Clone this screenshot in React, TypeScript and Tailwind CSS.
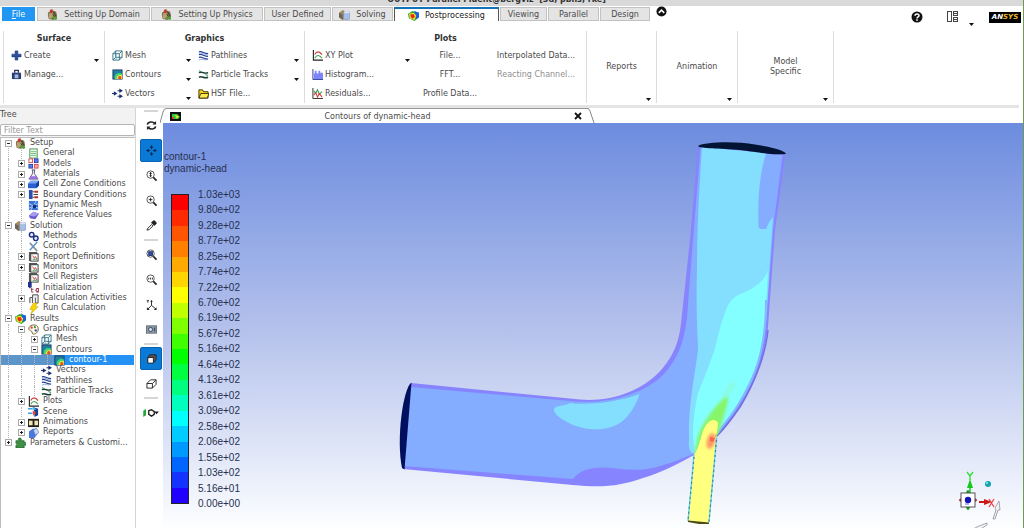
import React from 'react';

type IconName =
  | 'setup' | 'solution' | 'results' | 'general' | 'models' | 'materials' | 'cellzone' | 'boundary'
  | 'dynmesh' | 'reference' | 'methods' | 'controls' | 'report' | 'init' | 'calc' | 'run' | 'graphics'
  | 'mesh' | 'contours' | 'vectors' | 'pathlines' | 'particles' | 'plots' | 'scene' | 'animations'
  | 'reports' | 'params' | 'plus' | 'manage' | 'folder' | 'histogram' | 'residuals';

// every icon is drawn on a 12x12 grid
const icons: Record<IconName, React.ReactNode> = {
  setup: (
    <>
      <path d="M1 4 5 1l5 2 1 5-4 4-5-1-1-4z" fill="#7d6a4a" />
      <path d="M2 5l4-2 1 5-3 3-2-1z" fill="#b5a272" />
      <path d="M3 1l3-1v4L4 5z" fill="#c9362b" />
      <path d="M6 6l5 5M7 3l3 5" stroke="#3c3a28" strokeWidth="1" />
      <path d="M7 8l4 1-1 3-4-1z" fill="#4fa52f" />
    </>
  ),
  solution: (
    <>
      <path d="M0 4 4 1l4 2v7l-4 2-4-3z" fill="#a58d58" />
      <path d="M0 4l4 2v6l-4-3z" fill="#6c665a" />
      <path d="M5 4c0-2 7-2 7 0v6c0 2-7 2-7 0z" fill="#a9bfe6" stroke="#6d85b5" strokeWidth=".6" />
      <ellipse cx="8.500" cy="3.500" rx="3.200" ry="1.200" fill="#d8e3f7" />
    </>
  ),
  results: (
    <>
      <path d="M0 4 5 1l7 2v5l-5 4-6-3z" fill="#27a53c" />
      <path d="M7 1l5 2v5l-3 2z" fill="#1d5fe0" />
      <path d="M1 4l5-1 3 3-2 5-5-2z" fill="#f5e51c" />
      <path d="M2.500 4.500l4 0 1 3-2.500 2-2-2z" fill="#e8281c" />
    </>
  ),
  general: (
    <>
      <rect x="2" y="1" width="8" height="10" fill="#f3fff3" stroke="#3f8f4a" />
      <path d="M3 4h6M3 6h6M3 8h6" stroke="#5bb068" strokeWidth=".9" />
    </>
  ),
  models: (
    <>
      <rect x="1" y="1" width="4" height="4" fill="#fff" stroke="#e04848" />
      <rect x="7" y="1" width="4" height="4" fill="#5b7be8" stroke="#2d46b5" />
      <rect x="1" y="7" width="4" height="4" fill="#5b7be8" stroke="#2d46b5" />
      <rect x="7" y="7" width="4" height="4" fill="#f8b0b0" stroke="#e04848" />
    </>
  ),
  materials: (
    <>
      <path d="M4 1h4M5 1v4L1 11h10L7 5V1" fill="#f4f1ff" stroke="#5a5470" />
      <path d="M3 8h6l2 3H1z" fill="#9a6fe0" />
    </>
  ),
  cellzone: (
    <>
      <path d="M0 5l3-3h9v5l-3 3H0z" fill="#2b5fd0" />
      <path d="M0 5l3-3h9L9 5z" fill="#7ba6f5" />
      <path d="M9 5l3-3v5l-3 3z" fill="#173c94" />
    </>
  ),
  boundary: (
    <>
      <path d="M1 1h4v10H1z" fill="#2a4fb0" />
      <path d="M7 2h4v2H7zM7 8h4v2H7z" fill="#b5322c" />
      <path d="M5 3h2M5 9h2M6 6h5" stroke="#333" />
    </>
  ),
  dynmesh: (
    <>
      <rect x="1" y="1" width="10" height="10" fill="#3a73d8" />
      <path d="M1 4l10 5M3 11l6-10M1 9l10-5" stroke="#cfe0ff" strokeWidth=".9" />
      <circle cx="7" cy="7" r="2" fill="#0f2f80" />
    </>
  ),
  reference: (
    <>
      <path d="M1 6l5-4 6 2-4 6-6-1z" fill="#6a5ad0" />
      <path d="M1 6l5-4 6 2-5 3z" fill="#a89cf0" />
    </>
  ),
  methods: (
    <>
      <circle cx="4" cy="4" r="2.500" fill="#dfe5ff" stroke="#1d2b80" strokeWidth="1.500" />
      <circle cx="8.500" cy="8" r="2.500" fill="#dfe5ff" stroke="#1d2b80" strokeWidth="1.500" />
    </>
  ),
  controls: (
    <>
      <path d="M2 2l8 9" stroke="#8a949e" strokeWidth="1.800" />
      <path d="M10 1L2 10" stroke="#5c93c8" strokeWidth="1.600" />
    </>
  ),
  report: (
    <>
      <path d="M1 1h9v2H3v8H1z" fill="#555" />
      <rect x="3" y="3" width="8" height="8" fill="#fff" stroke="#333" />
      <path d="M5 5l2 3 1-2 2 3" stroke="#d04040" fill="none" />
      <path d="M5 9h5" stroke="#3a9a50" />
    </>
  ),
  init: (
    <>
      <path d="M0 0h4v5l-2 2-2-2z" fill="#20338f" />
      <path d="M4 6v5h2M3 8h3M7.500 9h1.500" stroke="#8a2a3a" strokeWidth=".9" />
      <rect x="9.500" y="7" width="2" height="4" stroke="#8a2a3a" strokeWidth=".9" />
    </>
  ),
  calc: <path d="M2 11V5h3v6M5 5V2h6v9H8V5" fill="#eee" stroke="#444" />,
  run: <path d="M6 0h4L8 4h3L3 12l2-5H2z" fill="#f7d800" stroke="#d09a00" strokeWidth=".6" />,
  graphics: (
    <>
      <path d="M1 4c2-4 9-4 10 0s-2 7-5 7c-2 0-1-2-2-3S0 7 1 4z" fill="#fff7e0" stroke="#6b5a38" />
      <circle cx="4" cy="4" r="1.200" fill="#d33" />
      <circle cx="7.500" cy="3.500" r="1.200" fill="#2a9a3a" />
      <circle cx="8.500" cy="7" r="1.300" fill="#2a55d0" />
    </>
  ),
  mesh: (
    <>
      <path d="M1 4h7v7H1zM4 1h7v7H4zM1 4l3-3M8 4l3-3M8 11l3-3M1 11l3-3" fill="none" stroke="#1f6577" strokeWidth=".9" />
      <path d="M4.500 4v7" stroke="#58a6b8" strokeWidth=".8" />
    </>
  ),
  contours: (
    <>
      <rect x="1" y="1" width="10" height="10" fill="#1f7f9c" stroke="#1a3f6c" />
      <path d="M3 11c-1-5 3-8 8-6v6z" fill="#3fd67a" />
      <path d="M5 11c0-4 3-5 6-4v4z" fill="#f2e33a" />
      <circle cx="8.500" cy="9.500" r="1.800" fill="#e64a2e" />
    </>
  ),
  vectors: (
    <>
      <path d="M0 6h4M6 3h3M6 9h3" stroke="#1c2f6e" strokeWidth="1.300" />
      <path d="M2 3.500l4 2.500-4 2.500zM8 .5l4 2.500-4 2.500zM8 6.500l4 2.500-4 2.500z" fill="#1c2f6e" />
    </>
  ),
  pathlines: (
    <>
      <path d="M1 2c4-1 5 2 10 2M1 5c4-1 5 2 10 2M1 8c4-1 5 2 10 2" fill="none" stroke="#25418f" strokeWidth="1.300" />
      <path d="M1 3.500c4-1 5 2 10 2M1 11c4-2 6 0 8 0" fill="none" stroke="#8aa4e0" />
    </>
  ),
  particles: (
    <>
      <path d="M1 4c4-2 5 2 10 0M1 9c4-2 5 2 10 0" fill="none" stroke="#1d3c33" strokeWidth="1.600" />
      <path d="M1 2l3 1M8 6l3 1" stroke="#3b9c6b" strokeWidth="1.200" />
    </>
  ),
  plots: (
    <>
      <path d="M1.500 0v11H12" fill="none" stroke="#222" strokeWidth="1.200" />
      <path d="M3 5c2-4 5-4 8 0" fill="none" stroke="#d43a3a" strokeWidth="1.200" />
      <path d="M3 9c2-4 5-4 8 0" fill="none" stroke="#3ba04c" strokeWidth="1.200" />
    </>
  ),
  scene: (
    <>
      <path d="M0 3h5M0 8h5" stroke="#3aa0e8" strokeWidth="1.600" />
      <path d="M5 1l6 2v7l-4 2V6z" fill="#173f9a" />
      <path d="M5 5l4 2-3 4z" fill="#e6402a" />
      <path d="M6 1l3 3H5z" fill="#45c8e8" />
    </>
  ),
  animations: (
    <>
      <rect x="0" y="2" width="12" height="9" fill="#221f18" />
      <rect x="1" y="4" width="4" height="5" fill="#efe7b8" />
      <rect x="7" y="4" width="4" height="5" fill="#efe7b8" />
    </>
  ),
  reports: (
    <>
      <path d="M1 5l4-3h5v6l-3 4H1z" fill="#4a78dc" />
      <path d="M6 4l3-3 3 5-4 3z" fill="#c9d8fa" stroke="#4a66a0" strokeWidth=".6" />
    </>
  ),
  params: <path d="M1 4h3c-2-4 4-4 3 0h3v2c4-1 3 4 0 3v3H1V9c2 0 2-2 0-2z" fill="#3f8f46" stroke="#1f5a2a" strokeWidth=".7" />,
  plus: <path d="M4.500 1h3v3.500H11v3H7.500V11h-3V7.500H1v-3h3.500z" fill="#2b4f9e" stroke="#1c3474" strokeWidth=".6" />,
  manage: (
    <>
      <path d="M4 4V1.500h4V4" fill="none" stroke="#26365c" strokeWidth="1.400" />
      <rect x="1" y="4" width="10" height="7" fill="#2c4277" />
      <rect x="4" y="6" width="4" height="4" fill="#a9bbe2" />
    </>
  ),
  folder: (
    <>
      <path d="M1 2h4l1 2h5v7H1z" fill="#f2d21a" stroke="#3d3405" />
      <path d="M1 11l2-5h9l-2 5z" fill="#ffe94a" stroke="#3d3405" />
    </>
  ),
  histogram: (
    <>
      <path d="M2 11V5h1V2h2v3h2V2h2v2h3v7z" fill="#7c86f8" />
      <path d="M1 0v11.500h11" fill="none" stroke="#28348c" />
    </>
  ),
  residuals: (
    <>
      <path d="M1 0v11.500h11" fill="none" stroke="#222" />
      <path d="M2 3l2 3 2-4 2 5 3-3" fill="none" stroke="#2f9c48" strokeWidth="1.100" />
      <path d="M2 8l2-3 2 5 2-4 3 4" fill="none" stroke="#d43a3a" strokeWidth="1.100" />
    </>
  ),
};

function Icon({ name }: { name: IconName }) {
  return (
    <svg viewBox="0 0 12 12" className="h-[11px] w-[11px] shrink-0" fill="none" aria-hidden="true">
      {icons[name]}
    </svg>
  );
}

function Caret({ className = '' }: { className?: string }) {
  return (
    <svg viewBox="0 0 5 3" className={`h-[3px] w-[5px] shrink-0 ${className}`} aria-hidden="true">
      <path d="M0 0h5L2.500 3z" fill="#111" />
    </svg>
  );
}

const tabs: { label: string; icon?: IconName; width: string; active?: boolean }[] = [
  { label: 'Setting Up Domain', icon: 'setup', width: 'w-[113px]' },
  { label: 'Setting Up Physics', icon: 'setup', width: 'w-[112px]' },
  { label: 'User Defined', width: 'w-[67px]' },
  { label: 'Solving', icon: 'solution', width: 'w-[61px]' },
  { label: 'Postprocessing', icon: 'results', width: 'w-[105px]', active: true },
  { label: 'Viewing', width: 'w-[47px]' },
  { label: 'Parallel', width: 'w-[51px]' },
  { label: 'Design', width: 'w-[50px]' },
];

function TabStrip() {
  return (
    <nav className="flex h-[15px] items-end gap-px pl-[2px]">
      <button className="mr-px h-[14px] w-[33px] bg-[#2196f3] text-white">
        <span className="underline">F</span>ile
      </button>
      {tabs.map((tab) => (
        <button
          key={tab.label}
          className={`flex h-[14px] items-center justify-center whitespace-nowrap ${tab.width} ${
            tab.icon ? 'gap-[6px]' : ''
          } ${
            tab.active
              ? 'border-x border-t-2 border-x-[#555] border-t-[#1273b8] bg-white text-[#222]'
              : 'border border-[#c2c2c2] bg-[#e4e4e4]'
          }`}
        >
          {tab.icon && <Icon name={tab.icon} />}
          {tab.label}
        </button>
      ))}
      <button aria-label="Collapse ribbon" className="ml-[5px] self-start">
        <svg viewBox="0 0 12 12" className="h-[11px] w-[11px]">
          <circle cx="6" cy="6" r="5.500" fill="#111" />
          <path d="M3 7.500L6 4.500l3 3" stroke="#fff" strokeWidth="1.600" fill="none" />
        </svg>
      </button>
    </nav>
  );
}

function RibbonItem({ icon, label, menu }: { icon: IconName; label: string; menu?: boolean }) {
  return (
    <button className="flex items-center gap-[2px] whitespace-nowrap text-left">
      <Icon name={icon} />
      <span className="flex-1">{label}</span>
      {menu && <Caret className="mb-[3px] self-end" />}
    </button>
  );
}

function RibbonGroup({ title, width, children }: { title: string; width: string; children: React.ReactNode }) {
  return (
    <section className={`flex flex-col border-r border-[#dcdcdc] ${width}`}>
      <h2 className="h-[15px] text-center leading-[15px] font-bold text-[#333]">{title}</h2>
      {children}
    </section>
  );
}

function RibbonMenu({ label, width }: { label: string; width: string }) {
  return (
    <button className={`relative flex items-center justify-center border-r border-[#dcdcdc] leading-[10px] ${width}`}>
      <span className="flex w-[40px] justify-center text-center">{label}</span>
      <Caret className="absolute right-[5px] bottom-[2px]" />
    </button>
  );
}

function Ribbon() {
  return (
    <div className="mt-[10px] ml-[3px] flex h-[72px] border-l border-[#dcdcdc]">
      <RibbonGroup title="Surface" width="w-[101px]">
        <div className="grid flex-1 grid-rows-3 pr-[5px] pl-[7px]">
          <RibbonItem icon="plus" label="Create" menu />
          <RibbonItem icon="manage" label="Manage..." />
        </div>
      </RibbonGroup>
      <RibbonGroup title="Graphics" width="w-[200px]">
        <div className="grid flex-1 grid-cols-[79px_101px] grid-rows-3 gap-x-[7px] pl-[7px]">
          <RibbonItem icon="mesh" label="Mesh" menu />
          <RibbonItem icon="pathlines" label="Pathlines" menu />
          <RibbonItem icon="contours" label="Contours" menu />
          <RibbonItem icon="particles" label="Particle Tracks" menu />
          <RibbonItem icon="vectors" label="Vectors" menu />
          <RibbonItem icon="folder" label="HSF File..." />
        </div>
      </RibbonGroup>
      <RibbonGroup title="Plots" width="w-[282px]">
        <div className="grid flex-1 grid-cols-[98px_80px_92px] grid-rows-3 pl-[7px] whitespace-nowrap">
          <RibbonItem icon="plots" label="XY Plot" menu />
          <button>File...</button>
          <button>Interpolated Data...</button>
          <RibbonItem icon="histogram" label="Histogram..." />
          <button>FFT...</button>
          <button disabled className="text-[#8f8f8f]">Reacting Channel...</button>
          <RibbonItem icon="residuals" label="Residuals..." />
          <button>Profile Data...</button>
        </div>
      </RibbonGroup>
      <RibbonMenu label="Reports" width="w-[70px]" />
      <RibbonMenu label="Animation" width="w-[81px]" />
      <RibbonMenu label="Model Specific" width="w-[96px]" />
    </div>
  );
}

function HeaderTools() {
  return (
    <div className="flex items-start pt-[5px] pr-[2px]">
      <button aria-label="Help" className="mr-[24px]">
        <svg viewBox="0 0 12 12" className="h-[12px] w-[12px]">
          <circle cx="6" cy="6" r="5.500" fill="#111" />
          <path d="M4 4.800C4 2.400 8 2.400 8 4.700 8 6 6 6 6 7.500" stroke="#fff" strokeWidth="1.500" fill="none" />
          <rect x="5.200" y="8.300" width="1.600" height="1.500" fill="#fff" />
        </svg>
      </button>
      <button aria-label="Arrange windows" className="flex items-end gap-[11px]">
        <svg viewBox="0 0 11 11" className="h-[11px] w-[11px]" fill="none" stroke="#444">
          <rect x=".5" y=".5" width="4" height="10" />
          <rect x="6.500" y=".5" width="4" height="4" />
          <rect x="6.500" y="6.500" width="4" height="4" />
          <path d="M6.500 2.500h4M6.500 8.500h4" />
        </svg>
        <Caret className="-mb-1" />
      </button>
      <div className="mt-px ml-[15px] flex h-[11px] w-[32px] items-center justify-center bg-black text-[7px] font-bold text-white italic">
        AN<span className="text-[#e8b92c]">SYS</span>
      </div>
    </div>
  );
}

type Node = { label: string; icon: IconName; depth: number; toggle?: '+' | '-'; selected?: boolean };

const nodes: Node[] = [
  { label: 'Setup', icon: 'setup', depth: 0, toggle: '-' },
  { label: 'General', icon: 'general', depth: 1 },
  { label: 'Models', icon: 'models', depth: 1, toggle: '+' },
  { label: 'Materials', icon: 'materials', depth: 1, toggle: '+' },
  { label: 'Cell Zone Conditions', icon: 'cellzone', depth: 1, toggle: '+' },
  { label: 'Boundary Conditions', icon: 'boundary', depth: 1, toggle: '+' },
  { label: 'Dynamic Mesh', icon: 'dynmesh', depth: 1 },
  { label: 'Reference Values', icon: 'reference', depth: 1 },
  { label: 'Solution', icon: 'solution', depth: 0, toggle: '-' },
  { label: 'Methods', icon: 'methods', depth: 1 },
  { label: 'Controls', icon: 'controls', depth: 1 },
  { label: 'Report Definitions', icon: 'report', depth: 1, toggle: '+' },
  { label: 'Monitors', icon: 'report', depth: 1, toggle: '+' },
  { label: 'Cell Registers', icon: 'report', depth: 1 },
  { label: 'Initialization', icon: 'init', depth: 1 },
  { label: 'Calculation Activities', icon: 'calc', depth: 1, toggle: '+' },
  { label: 'Run Calculation', icon: 'run', depth: 1 },
  { label: 'Results', icon: 'results', depth: 0, toggle: '-' },
  { label: 'Graphics', icon: 'graphics', depth: 1, toggle: '-' },
  { label: 'Mesh', icon: 'mesh', depth: 2, toggle: '+' },
  { label: 'Contours', icon: 'contours', depth: 2, toggle: '-' },
  { label: 'contour-1', icon: 'contours', depth: 3, selected: true },
  { label: 'Vectors', icon: 'vectors', depth: 2 },
  { label: 'Pathlines', icon: 'pathlines', depth: 2 },
  { label: 'Particle Tracks', icon: 'particles', depth: 2 },
  { label: 'Plots', icon: 'plots', depth: 1, toggle: '+' },
  { label: 'Scene', icon: 'scene', depth: 1 },
  { label: 'Animations', icon: 'animations', depth: 1, toggle: '+' },
  { label: 'Reports', icon: 'reports', depth: 1, toggle: '+' },
  { label: 'Parameters & Customi...', icon: 'params', depth: 0, toggle: '+' },
];

function TreeRow({ node }: { node: Node }) {
  return (
    <li
      role="treeitem"
      aria-selected={!!node.selected}
      className={`flex min-h-0 flex-1 items-center pl-px ${
        node.selected ? 'bg-linear-to-r from-[#5b95c9] from-40% to-[#2492f5] to-40% text-white' : ''
      }`}
    >
      {Array.from({ length: node.depth }, (_, i) => (
        <span key={i} className="ml-[6px] h-full w-[7px] shrink-0 border-l border-dotted border-[#b5b5b5]" />
      ))}
      <span className="flex h-full w-[13px] shrink-0 items-center justify-center">
        {node.toggle ? (
          <svg viewBox="0 0 7 7" className="h-[7px] w-[7px]" fill="#fff" stroke="#aaa">
            <rect x=".5" y=".5" width="6" height="6" />
            <path d={node.toggle === '+' ? 'M2 3.500h3M3.500 2v3' : 'M2 3.500h3'} stroke="#222" />
          </svg>
        ) : (
          <span className="ml-[6px] h-full w-[7px] border-l border-dotted border-[#b5b5b5]" />
        )}
      </span>
      <Icon name={node.icon} />
      <button className="ml-[4px] leading-[10px] whitespace-nowrap">{node.label}</button>
    </li>
  );
}

function TreePanel() {
  return (
    <aside className="flex w-[136px] shrink-0 flex-col border-r border-[#d5d5d5] bg-[#f2f2f2]">
      <label htmlFor="tree-filter" className="h-[16px] leading-[14px]">
        Tree
      </label>
      <input
        id="tree-filter"
        placeholder="Filter Text"
        className="h-[12px] rounded-[2px] border border-[#b4b4b4] bg-white px-[3px] placeholder:text-[#999]"
      />
      <div className="mt-px flex-1 border-t border-l border-[#bdbdbd] bg-white">
        <ul role="tree" className="flex h-[310px] flex-col pr-px">
          {nodes.map((node) => (
            <TreeRow key={node.label + node.depth} node={node} />
          ))}
        </ul>
      </div>
    </aside>
  );
}

function Lens({ children }: { children?: React.ReactNode }) {
  return (
    <>
      <circle cx="5" cy="5" r="4" fill="#fff" strokeWidth=".8" />
      <path d="M8 8l3.500 3.500" strokeWidth="1.800" />
      {children}
    </>
  );
}

const tools: ({ label: string; active?: boolean; art: React.ReactNode } | null)[] = [
  null,
  {
    label: 'Rotate view',
    art: (
      <>
        <path d="M1.500 5C2 2 7 1 10 4M10.500 7C10 10 5 11 2 8" strokeWidth="1.700" />
        <path d="M11 1v4H7zM1 11V7h4z" fill="#222" stroke="none" />
      </>
    ),
  },
  {
    label: 'Pan',
    active: true,
    art: (
      <>
        <path d="M6 3v1.500M6 7.500V9M3 6h1.500M7.500 6H9" stroke="#06264d" />
        <path d="M6 0l2 3H4zM6 12l2-3H4zM0 6l3-2v4zM12 6L9 4v4z" fill="#06264d" stroke="none" />
      </>
    ),
  },
  { label: 'Zoom', art: <Lens><path d="M5 3v4" /><path d="M3.500 4.300L5 2l1.500 2.300zM3.500 5.700L5 8l1.500-2.300z" fill="#222" stroke="none" /></Lens> },
  { label: 'Zoom in', art: <Lens><path d="M5 3v4M3 5h4" /></Lens> },
  {
    label: 'Probe',
    art: (
      <>
        <path d="M1 11l1-2 4-4 1.500 1.500-4 4z" fill="#fff" />
        <path d="M6 3l3 3 2-2c1-1-2-4-3-3z" fill="#222" />
      </>
    ),
  },
  null,
  { label: 'Fit to window', art: <Lens><rect x="3" y="3" width="4" height="4" fill="#2f4ea8" stroke="#1a2e70" /></Lens> },
  { label: 'Zoom to scale', art: <Lens><path d="M3 4v2M5 4v2M7 4v2" /></Lens> },
  {
    label: 'Orient view',
    art: (
      <>
        <path d="M6 2v5L2 11M6 7l5 4M1 1l1 1.500M3 1L2 2.500V4" />
        <path d="M4.500 3L6 1l1.500 2zM1 9v3h3zM11.500 9v3h-3z" fill="#222" stroke="none" />
      </>
    ),
  },
  {
    label: 'Save picture',
    art: (
      <>
        <rect x="0.500" y="2" width="11" height="8" fill="#8b97a5" stroke="#66727f" />
        <circle cx="5" cy="6" r="2.200" fill="#d5e1ed" stroke="#34445a" />
        <path d="M9.500 4v4" stroke="#26374e" />
      </>
    ),
  },
  null,
  {
    label: 'Shaded view',
    active: true,
    art: (
      <>
        <path d="M2 5l2-3h7v5l-2 3H2z" fill="#555" />
        <rect x="2" y="5" width="6" height="6" fill="#fff" />
      </>
    ),
  },
  { label: 'Perspective', art: <path d="M1 6h6v5H1zM1 6l4-4h6L7 6M11 2v5l-4 4" fill="#fff" /> },
  null,
  {
    label: 'Display options',
    art: (
      <>
        <path d="M-3 4l3-2v7l-3 2z" fill="#23a839" stroke="none" />
        <path d="M3 4l3-1 3 2v3l-3 2-3-2z" fill="#fff" strokeWidth="1.500" />
        <path d="M9 5h5l-2.500 3z" fill="#111" stroke="none" />
      </>
    ),
  },
];

function ToolStrip() {
  return (
    <div className="flex w-[27px] shrink-0 flex-col items-center bg-white pt-px pl-[3px]">
      {tools.map((tool, i) =>
        tool ? (
          <button
            key={tool.label}
            aria-label={tool.label}
            className={`my-px flex h-[23px] w-[22px] items-center justify-center rounded-[2px] ${
              tool.active ? 'border border-[#0a63b0] bg-[#0a7ad6]' : ''
            }`}
          >
            <svg viewBox="0 0 12 12" className="h-[11px] w-[11px] overflow-visible" fill="none" stroke="#222" aria-hidden="true">
              {tool.art}
            </svg>
          </button>
        ) : (
          <hr key={i} className="my-px h-[2px] w-[14px] border-y border-[#d6d6d6]" />
        ),
      )}
    </div>
  );
}

const scale: { label: string; color: string }[] = [
  { label: '1.03e+03', color: 'bg-[#ff0000]' },
  { label: '9.80e+02', color: 'bg-[#ff2a00]' },
  { label: '9.28e+02', color: 'bg-[#ff5500]' },
  { label: '8.77e+02', color: 'bg-[#ff8000]' },
  { label: '8.25e+02', color: 'bg-[#ffaa00]' },
  { label: '7.74e+02', color: 'bg-[#ffd500]' },
  { label: '7.22e+02', color: 'bg-[#ffff00]' },
  { label: '6.70e+02', color: 'bg-[#bfff00]' },
  { label: '6.19e+02', color: 'bg-[#80ff00]' },
  { label: '5.67e+02', color: 'bg-[#40ff00]' },
  { label: '5.16e+02', color: 'bg-[#00ff00]' },
  { label: '4.64e+02', color: 'bg-[#00ff40]' },
  { label: '4.13e+02', color: 'bg-[#00ff80]' },
  { label: '3.61e+02', color: 'bg-[#00ffbf]' },
  { label: '3.09e+02', color: 'bg-[#00ffff]' },
  { label: '2.58e+02', color: 'bg-[#00ccff]' },
  { label: '2.06e+02', color: 'bg-[#0099ff]' },
  { label: '1.55e+02', color: 'bg-[#0066ff]' },
  { label: '1.03e+02', color: 'bg-[#1433ff]' },
  { label: '5.16e+01', color: 'bg-[#2000ff]' },
];

function Legend() {
  return (
    <div className="absolute top-[28px] left-[1px] font-['Liberation_Sans',sans-serif] text-[10px] leading-[12px] text-[#26304f]">
      <p>contour-1</p>
      <p>dynamic-head</p>
      <div className="mt-[12px] flex gap-[9px] pl-[7px]">
        <div className="mt-[7px] flex h-[310px] w-[18px] flex-col border border-[#222]">
          {scale.map((band) => (
            <span key={band.label} className={`flex-1 ${band.color}`} />
          ))}
        </div>
        <ul className="flex h-[325px] flex-col">
          {scale.map((band) => (
            <li key={band.label} className="flex flex-1 items-center justify-end">{band.label}</li>
          ))}
          <li className="flex flex-1 items-center justify-end">0.00e+00</li>
        </ul>
      </div>
    </div>
  );
}

function PipeModel() {
  return (
    <svg viewBox="163 123 860 405" className="absolute inset-0 h-full w-full" aria-label="Contours of dynamic head on the elbow">
      <defs>
        <filter id="soft" x="-50%" y="-50%" width="200%" height="200%">
          <feGaussianBlur stdDeviation="1.500" />
        </filter>
        <clipPath id="jet">
          <path d="M689 385H760L717 436 709 524 688 522 694 455z" />
        </clipPath>
      </defs>
      {/* wall */}
      <path
        d="M411 383L580 399.500C606 402 640 394 662 369C678 350 680 335 682 314L690 240 698 146 785.500 153 775 230 768.500 320C767 350 757 380 740 407C731 420 722 431 717 436L694 455C680 463 660 473 643 478C620 486 603 488 573 485L403 469z"
        fill="#8784ff"
      />
      {/* second band */}
      <path
        d="M410.500 387L570 401C606 405 644 395 665 373C680 355 684 340 687 318L691 265 700.500 148 782.500 155 773 230 766.500 320C764 350 755 378 738 405L716 434 694 454C680 459 672 463 660 466C645 471 633 470 620 469C600 466 582 467 573 479L403.500 466z"
        fill="#84adff"
      />
      <path
        d="M554 409C556 405 565 406 570 403C580 405 605 403 613 401C623 399 632 397 639.500 394C637 404 628 418 620 423C608 431 588 431 573 425C562 420 553 414 554 409z"
        fill="#84dfff"
      />
      <path
        d="M702 147L766 153C758 180 758 205 758.500 227Q759 229 761 229H766C768 224 770 220 773 217L766 320C764 350 754 378 738 404L716 434 696 454C690 454 688 448 689 440C688 400 698 360 698 347C697 325 696 300 697 270C697 220 700 180 702 147z"
        fill="#84dfff"
      />
      <path
        d="M768 270C766 277 762 281 757 285C750 291 741 293 735 297C729 302 727 307 725 313C722 320 722 322 720 328C717 340 715 350 712 357C707 372 701 385 698 393C693 415 691 440 696 454L716 434C730 420 740 400 748 384C760 362 763 340 765 320z"
        fill="#84ffff"
      />
      <path d="M766 300C766 350 755 379 738 405C730 418 722 427 716 434" fill="none" stroke="#84b8ff" strokeWidth="2" />
      <path d="M768 330C766 352 756 381 740 407C731 420 722 431 717 436" fill="none" stroke="#6f70e6" strokeWidth="1.500" />
      <path d="M730 381l6 4-12 16-6 4z" fill="#8ef8cf" opacity=".6" filter="url(#soft)" />
      {/* side inlet and the jet that leaves it */}
      <g clipPath="url(#jet)">
        <path d="M694 456C697 440 698 432 704 423C710 413 718 402 728 396C729 404 722 420 718 436z" fill="#86f56a" filter="url(#soft)" />
      </g>
      <path d="M694 455C700 447 701 432 706 425C710 420 715 418 718 423L717 433C715 435 714 437 717 438L709 523 688 521z" fill="#ffff80" />
      <ellipse cx="711" cy="441" rx="4" ry="8" transform="rotate(15 711 441)" fill="#ff7a5c" opacity=".8" filter="url(#soft)" />
      <path d="M710 437l5 1-2 4-3-1z" fill="#ff5f55" />
      <path d="M694 455L688 521M716.500 438L709 522" stroke="#4bd9dc" strokeWidth="1.300" />
      <path d="M694 457L688 521M716.500 440L709 522" stroke="#5a6fc0" strokeWidth="1.200" strokeDasharray="2 3" />
      <path d="M688 520.500L709 522.500V524L699 524 688 522z" fill="#4c4a12" />
      {/* open ends */}
      <path d="M411.500 382.500C403 388 396 440 402 468L404.500 469.500z" fill="#00105e" />
      <path d="M698 146C705 142 735 141 755 144.500C770 147 785 150 786 154C770 155 765 153 740 150C720 148 700 149 698 146z" fill="#031334" />
    </svg>
  );
}

function AxisTriad() {
  return (
    <svg viewBox="0 0 50 60" className="absolute right-[14px] bottom-0 h-[60px] w-[50px]" aria-label="Axis triad">
      <path d="M11 26V16" stroke="#14c81e" strokeWidth="1.500" />
      <path d="M11 11l3 9H8z" fill="#14c81e" />
      <path d="M8 4l3 4 3-4M11 8v4" stroke="#35e03c" strokeWidth="1.400" fill="none" />
      <ellipse cx="9" cy="32" rx="9" ry="3" fill="#b01616" />
      <ellipse cx="9" cy="32" rx="3" ry="10" fill="#159c1c" />
      <rect x="2" y="25" width="14" height="14" fill="#fff" stroke="#555" />
      <circle cx="9" cy="32" r="3.200" fill="#1414b4" />
      <path d="M6 36h4" stroke="#5a6cff" />
      <path d="M20 34h7" stroke="#cc1a1a" strokeWidth="2" />
      <path d="M25 31l8 3-8 3z" fill="#cc1a1a" />
      <path d="M30 31l5 8M35 31l-5 8" stroke="#f03a3a" strokeWidth="1.200" />
      <circle cx="29" cy="16" r="3" fill="#12a5b0" />
      <circle cx="28" cy="15" r="1" fill="#9beaf0" />
      <path d="M34 51l3-9-1-2 4-7 1 9h-2l-3 9z" fill="#f4f4f8" stroke="#8f8f98" strokeWidth=".8" />
      <path d="M14 61l6-3 8-3v2l-8 5z" fill="#f4f4f8" stroke="#8f8f98" strokeWidth=".8" />
    </svg>
  );
}

function Viewport() {
  return (
    <main className="flex min-w-0 flex-1 flex-col">
      <div className="flex h-[15px] bg-white">
        <svg viewBox="0 0 6 15" className="-ml-[3px] h-[15px] w-[6px]" aria-hidden="true">
          <path d="M0 15L3 4Q4 .5 6 .5" fill="none" stroke="#888" />
        </svg>
        <div className="flex w-[421px] items-center justify-between border-t border-[#999] bg-white pr-[4px] pl-[4px]">
          <svg viewBox="0 0 11 9" className="h-[9px] w-[11px]" aria-hidden="true">
            <rect width="11" height="9" fill="#111" />
            <path d="M2 2h5l3 3-2 2H2z" fill="#2fcf3a" />
            <path d="M5 3l4 1-2 3z" fill="#f2e53a" />
            <path d="M2 5h2v2H2z" fill="#e63a2a" />
          </svg>
          <span>Contours of dynamic-head</span>
          <button aria-label="Close" className="pr-px">
            <svg viewBox="0 0 8 8" className="h-[8px] w-[8px]">
              <path d="M1 1l6 6M7 1L1 7" stroke="#111" strokeWidth="1.800" />
            </svg>
          </button>
        </div>
        <svg viewBox="0 0 8 15" className="h-[15px] w-[8px]" aria-hidden="true">
          <path d="M0 .5h1Q2 .5 3 3l4 12" fill="none" stroke="#888" />
        </svg>
      </div>
      <div className="relative flex-1 overflow-hidden bg-linear-to-b from-[#6d8cdf] via-[#b3c0eb] via-50% to-[#fdfeff]">
        <PipeModel />
        <Legend />
        <AxisTriad />
      </div>
    </main>
  );
}

export default function App() {
  return (
    <div className="flex min-h-screen w-full flex-col border-r border-[#6f9a55] bg-white font-['DejaVu_Sans',sans-serif] text-[8px] leading-[11px] text-[#4a4a4a]">
      <header className="flex h-[6px] items-end justify-center overflow-hidden bg-[#d9d9d9] text-[#333]">
        <h1 className="mb-px pr-[30px] font-bold whitespace-pre">OUTPUT Parallel Fluent@bergvlz  [3d, pbns, rke]</h1>
      </header>
      <div className="flex justify-between">
        <div>
          <TabStrip />
          <Ribbon />
        </div>
        <HeaderTools />
      </div>
      <div className="mt-[2px] mr-[4px] h-[3px] bg-[#e4e4e4]" />
      <div className="flex flex-1">
        <TreePanel />
        <ToolStrip />
        <Viewport />
      </div>
    </div>
  );
}
